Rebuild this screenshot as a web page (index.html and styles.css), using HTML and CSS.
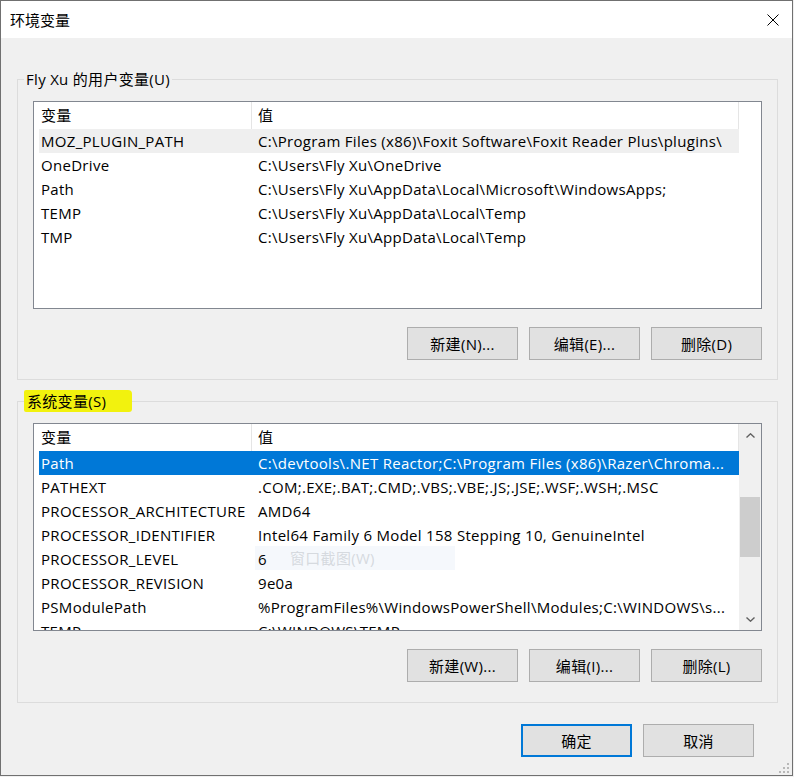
FILE: index.html
```html
<!DOCTYPE html>
<html lang="zh-CN">
<head>
<meta charset="utf-8">
<title>环境变量</title>
<link rel="stylesheet" href="styles.css">
</head>
<body>
<div class="window">
  <div class="titlebar">
    <span class="title">环境变量</span>
    <svg class="close" width="12" height="12" viewBox="0 0 12 12"><path d="M0.5 0.5L11.5 11.5M11.5 0.5L0.5 11.5" stroke="#000" stroke-width="1" fill="none"/></svg>
  </div>
  <div class="content">
    <fieldset class="group">
      <legend class="legend">Fly Xu 的用户变量(U)</legend>
      <div class="list">
        <div class="list-main">
          <div class="header"><div class="h1">变量</div><div class="h2">值</div></div>
          <div class="row hover"><span class="c1">MOZ_PLUGIN_PATH</span><span class="c2">C:\Program Files (x86)\Foxit Software\Foxit Reader Plus\plugins\</span></div>
          <div class="row"><span class="c1">OneDrive</span><span class="c2">C:\Users\Fly Xu\OneDrive</span></div>
          <div class="row"><span class="c1">Path</span><span class="c2">C:\Users\Fly Xu\AppData\Local\Microsoft\WindowsApps;</span></div>
          <div class="row"><span class="c1">TEMP</span><span class="c2">C:\Users\Fly Xu\AppData\Local\Temp</span></div>
          <div class="row"><span class="c1">TMP</span><span class="c2">C:\Users\Fly Xu\AppData\Local\Temp</span></div>
        </div>
      </div>
      <div class="buttons">
        <div class="btn">新建(N)...</div>
        <div class="btn">编辑(E)...</div>
        <div class="btn">删除(D)</div>
      </div>
    </fieldset>
    <fieldset class="group group-sys">
      <legend class="legend legend-hl">系统变量(S)</legend>
      <div class="list">
        <div class="list-main">
          <div class="header"><div class="h1">变量</div><div class="h2">值</div></div>
          <div class="ghost">窗口截图(W)</div>
          <div class="row selected"><span class="c1">Path</span><span class="c2">C:\devtools\.NET Reactor;C:\Program Files (x86)\Razer\Chroma...</span></div>
          <div class="row"><span class="c1">PATHEXT</span><span class="c2">.COM;.EXE;.BAT;.CMD;.VBS;.VBE;.JS;.JSE;.WSF;.WSH;.MSC</span></div>
          <div class="row"><span class="c1">PROCESSOR_ARCHITECTURE</span><span class="c2">AMD64</span></div>
          <div class="row"><span class="c1">PROCESSOR_IDENTIFIER</span><span class="c2">Intel64 Family 6 Model 158 Stepping 10, GenuineIntel</span></div>
          <div class="row"><span class="c1">PROCESSOR_LEVEL</span><span class="c2">6</span></div>
          <div class="row"><span class="c1">PROCESSOR_REVISION</span><span class="c2">9e0a</span></div>
          <div class="row"><span class="c1">PSModulePath</span><span class="c2">%ProgramFiles%\WindowsPowerShell\Modules;C:\WINDOWS\s...</span></div>
          <div class="row"><span class="c1">TEMP</span><span class="c2">C:\WINDOWS\TEMP</span></div>
        </div>
        <div class="scrollbar">
          <div class="sb-btn"><svg width="9" height="5" viewBox="0 0 9 5"><path d="M0.5 4.5L4.5 0.8L8.5 4.5" stroke="#606060" stroke-width="1.4" fill="none"/></svg></div>
          <div class="sb-track"><div class="sb-thumb"></div></div>
          <div class="sb-btn"><svg width="9" height="5" viewBox="0 0 9 5"><path d="M0.5 0.5L4.5 4.2L8.5 0.5" stroke="#606060" stroke-width="1.4" fill="none"/></svg></div>
        </div>
      </div>
      <div class="buttons">
        <div class="btn">新建(W)...</div>
        <div class="btn">编辑(I)...</div>
        <div class="btn">删除(L)</div>
      </div>
    </fieldset>
    <div class="footer">
      <div class="btn btn-default">确定</div>
      <div class="btn">取消</div>
    </div>
  </div>
  <svg class="grip" width="14" height="14" viewBox="0 0 14 14">
    <rect x="9" y="2" width="2" height="2" fill="#b8b8b8"/>
    <rect x="5" y="6" width="2" height="2" fill="#b8b8b8"/>
    <rect x="9" y="6" width="2" height="2" fill="#b8b8b8"/>
    <rect x="1" y="10" width="2" height="2" fill="#b8b8b8"/>
    <rect x="5" y="10" width="2" height="2" fill="#b8b8b8"/>
    <rect x="9" y="10" width="2" height="2" fill="#b8b8b8"/>
  </svg>
</div>
</body>
</html>
```
FILE: styles.css
```css
* { box-sizing: border-box; }
html, body { margin: 0; padding: 0; background: #f0f0f0; }
body {
  font-family: "Open Sans", "Noto Sans CJK SC", sans-serif;
  font-size: 15px;
  letter-spacing: 0.3px;
  color: #000;
  width: 794px;
  height: 777px;
  overflow: hidden;
}
.window {
  position: relative;
  width: 793px;
  height: 776px;
  border: 1px solid #707070;
  display: flex;
  flex-direction: column;
  background: #f0f0f0;
}
.titlebar {
  height: 37px;
  flex: none;
  background: #fff;
  display: flex;
  align-items: center;
  justify-content: space-between;
  padding: 0 13px 0 9px;
}
.title { font-size: 15px; line-height: 20px; letter-spacing: 0; }
.close { display: block; }
.content {
  flex: 1;
  padding: 30px 14px 0 16px;
}
.group {
  margin: 0;
  padding: 11px 15px 19px 15px;
  border: 1px solid #dcdcdc;
  min-width: 0;
}
.group-sys { margin-top: 10px; padding-bottom: 20px; }
.legend {
  margin-left: -9px;
  padding: 0 2px;
  line-height: 22px;
  height: 22px;
}
.legend-hl {
  background: #f2f20e;
  padding: 0 26px 0 3px;
  border-radius: 2px 4px 3px 2px;
}
.list {
  height: 208px;
  border: 1px solid #828790;
  background: #fff;
  display: flex;
  overflow: hidden;
}
.list-main {
  width: 705px;
  flex: none;
  position: relative;
  z-index: 0;
  overflow: hidden;
}
.header { display: flex; height: 27px; }
.h1, .h2 {
  border-right: 1px solid #e5e5e5;
  line-height: 27px;
  white-space: nowrap;
}
.h1 { width: 218px; padding-left: 7px; }
.h2 { width: 487px; padding-left: 6px; }
.row {
  display: flex;
  height: 24px;
  line-height: 24px;
  margin-left: 5px;
  width: 700px;
  white-space: nowrap;
}
.row.hover { background: #efefef; }
.row.selected { background: #0078d7; color: #fff; }
.c1 { width: 212px; flex: none; padding-left: 2px; overflow: hidden; }
.c2 { flex: 1; padding-left: 7px; overflow: hidden; }
.ghost {
  position: absolute;
  left: 221px;
  top: 122px;
  width: 200px;
  height: 24px;
  line-height: 24px;
  padding-left: 35px;
  background: #f5f8fc;
  color: #d6dadf;
  z-index: -1;
}
.scrollbar {
  width: 22px;
  flex: none;
  background: #f0f0f0;
  display: flex;
  flex-direction: column;
}
.sb-btn {
  height: 22px;
  display: flex;
  align-items: center;
  justify-content: center;
}
.sb-btn svg { display: block; }
.sb-track { flex: 1; padding: 51px 1px 0 1px; }
.sb-thumb { height: 60px; background: #cdcdcd; }
.buttons {
  display: flex;
  justify-content: flex-end;
  gap: 11px;
  margin-top: 18px;
}
.btn {
  width: 111px;
  height: 33px;
  border: 1px solid #adadad;
  background: #e1e1e1;
  display: flex;
  align-items: center;
  justify-content: center;
  white-space: nowrap;
}
.btn-default { border: 2px solid #0078d7; }
.footer {
  display: flex;
  justify-content: flex-end;
  gap: 11px;
  margin-top: 21px;
  padding-right: 24px;
}
.grip { position: absolute; right: 0; bottom: 0; }
```
